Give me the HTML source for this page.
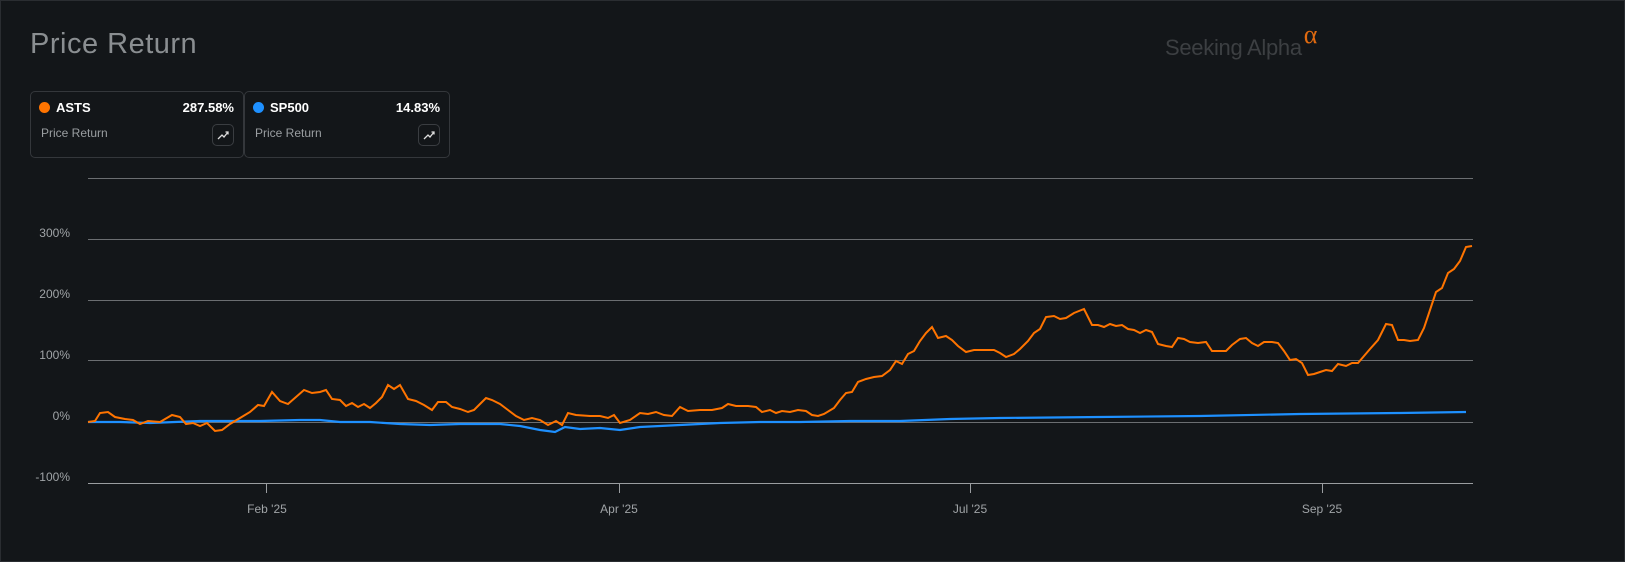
<!DOCTYPE html><html><head><style>
body{margin:0;background:#131619;width:1625px;height:562px;overflow:hidden;font-family:"Liberation Sans",Arial,sans-serif}
.frame{position:absolute;left:0;top:0;width:1623px;height:560px;border:1px solid #2a2d31}
.title{position:absolute;left:30px;top:28px;font-size:29px;color:#8a8e91;letter-spacing:0.5px}
.logo{position:absolute;left:1165px;top:32px;font-family:"Liberation Sans",sans-serif;font-size:22px;color:#3c3f42;letter-spacing:-0.3px}
.logo span{color:#e06a10;font-family:"Liberation Serif",serif;font-size:26px;position:relative;top:-12px;margin-left:2px}
.card{position:absolute;top:91px;height:65px;border:1px solid #34373b;border-radius:5px}
.dot{position:absolute;left:8px;top:10px;width:11px;height:11px;border-radius:50%}
.nm{position:absolute;left:25px;top:8px;color:#fff;font-weight:bold;font-size:13px}
.pc{position:absolute;right:9px;top:8px;color:#fff;font-weight:bold;font-size:13px}
.sub{position:absolute;left:10px;top:34px;color:#9a9ea1;font-size:12px}
.ic{position:absolute;right:9px;top:32px;width:20px;height:20px;border:1px solid #3a3d41;border-radius:5px}
.lab{position:absolute;left:0;width:70px;font-size:12px;color:#a0a4a7;text-align:right}
.xl{position:absolute;top:502px;font-size:12px;color:#a0a4a7;transform:translateX(-50%)}
</style></head><body><div class="frame"></div>
<div class="title">Price Return</div>
<div class="logo">Seeking Alpha<span>α</span></div>
<div class="card" style="left:30px;width:212px"><div class="dot" style="background:#ff7400"></div><div class="nm">ASTS</div><div class="pc">287.58%</div><div class="sub">Price Return</div><div class="ic"><svg width="20" height="20"><path d="M5 14 L9 10 L11 12 L15 7 M12.5 7 H15 V9.5" stroke="#ddd" stroke-width="1.3" fill="none"/></svg></div></div>
<div class="card" style="left:244px;width:204px"><div class="dot" style="background:#1e90ff"></div><div class="nm">SP500</div><div class="pc">14.83%</div><div class="sub">Price Return</div><div class="ic"><svg width="20" height="20"><path d="M5 14 L9 10 L11 12 L15 7 M12.5 7 H15 V9.5" stroke="#ddd" stroke-width="1.3" fill="none"/></svg></div></div>
<div class="lab" style="top:226px">300%</div>
<div class="lab" style="top:287px">200%</div>
<div class="lab" style="top:348px">100%</div>
<div class="lab" style="top:409px">0%</div>
<div class="lab" style="top:470px">-100%</div>
<div class="xl" style="left:267px">Feb '25</div><div class="xl" style="left:619px">Apr '25</div><div class="xl" style="left:970px">Jul '25</div><div class="xl" style="left:1322px">Sep '25</div>
<svg width="1625" height="562" style="position:absolute;left:0;top:0">
<g stroke="#6b6e71" stroke-width="1"><line x1="88" y1="178.5" x2="1473" y2="178.5"/><line x1="88" y1="239.5" x2="1473" y2="239.5"/><line x1="88" y1="300.5" x2="1473" y2="300.5"/><line x1="88" y1="360.5" x2="1473" y2="360.5"/><line x1="88" y1="422.5" x2="1473" y2="422.5"/></g>
<g stroke="#9a9da0"><line x1="88" y1="483.5" x2="1473" y2="483.5"/><line x1="266.5" y1="483" x2="266.5" y2="493"/><line x1="619.5" y1="483" x2="619.5" y2="493"/><line x1="970.5" y1="483" x2="970.5" y2="493"/><line x1="1322.5" y1="483" x2="1322.5" y2="493"/></g>
<polyline fill="none" stroke="#1e90ff" stroke-width="2.2" points="88,422 120,422 150,423 200,421 260,421 300,420 320,420 340,422 370,422 400,424 430,425 460,424 500,424 520,426 540,430 555,432 565,427 580,429 600,428 620,430 640,427 680,425 720,423 760,422 800,422 850,421 900,421 950,419 1000,418 1100,417 1200,416 1300,414 1400,413 1466,412"/>
<polyline fill="none" stroke="#ff7400" stroke-width="2" points="88,422 95,421 100,413 108,412 115,417 125,419 133,420 140,424 148,421 160,422 172,415 180,417 186,424 193,423 200,426 207,423 215,431 222,430 230,424 240,418 250,412 258,405 264,406 272,392 280,401 288,404 296,397 304,390 312,393 320,392 326,390 332,399 340,400 346,406 352,403 358,407 364,404 370,408 376,403 382,397 388,385 394,389 400,385 408,399 416,401 424,405 432,410 438,402 446,402 452,407 460,409 468,412 474,410 480,404 486,398 492,400 500,404 508,410 516,416 524,420 532,418 540,420 548,425 556,421 562,425 568,413 576,415 590,416 600,416 608,418 614,415 620,423 630,420 640,413 648,414 656,412 664,415 672,416 680,407 688,411 700,410 712,410 722,408 728,404 736,406 748,406 756,407 762,412 770,410 776,413 782,411 790,412 798,410 806,411 812,415 818,416 824,414 834,408 840,400 846,393 852,392 858,382 866,379 874,377 882,376 890,370 896,361 902,364 908,354 914,351 920,341 926,333 932,327 938,338 946,336 952,340 958,346 966,352 974,350 984,350 994,350 1000,353 1006,357 1014,354 1020,349 1028,341 1034,333 1040,329 1046,317 1054,316 1060,319 1066,318 1074,313 1084,309 1092,325 1098,325 1104,327 1110,324 1116,326 1122,325 1128,329 1134,330 1140,333 1146,330 1152,332 1158,344 1166,346 1172,347 1178,338 1184,339 1190,342 1198,343 1206,342 1212,351 1220,351 1226,351 1232,345 1240,339 1246,338 1252,343 1258,346 1264,342 1272,342 1278,343 1284,351 1290,360 1296,359 1302,363 1308,375 1314,374 1320,372 1326,370 1332,371 1338,364 1346,366 1352,363 1358,363 1364,356 1370,349 1378,340 1386,324 1392,325 1398,340 1404,340 1410,341 1418,340 1424,328 1430,310 1436,292 1442,288 1448,273 1454,269 1460,261 1466,247 1472,246"/>
</svg>
</body></html>
